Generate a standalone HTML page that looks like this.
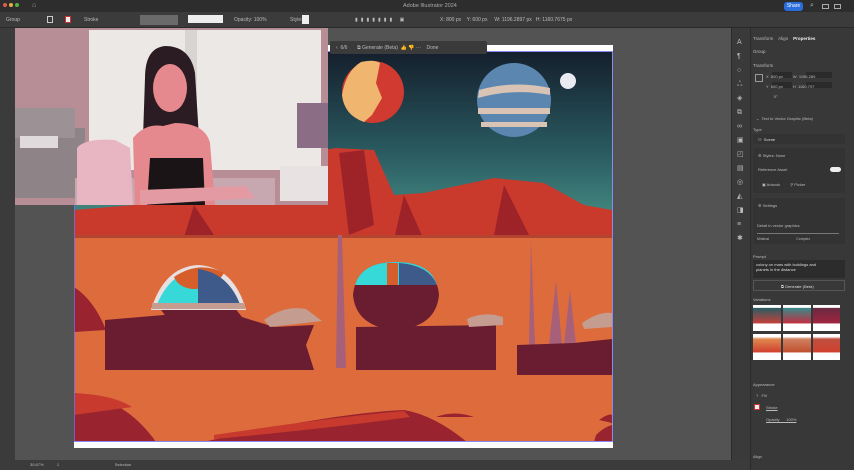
<!DOCTYPE html>
<html><head><meta charset="utf-8"><style>
*{margin:0;padding:0;box-sizing:border-box}
body{width:854px;height:470px;overflow:hidden;background:#535353;font-family:"Liberation Sans",sans-serif;position:relative;color:#ccc}
.abs{position:absolute}
.t{font-size:5px;color:#bbb;white-space:nowrap}
</style></head><body>
<!-- title bar -->
<div class="abs" style="left:0;top:0;width:854px;height:12px;background:#2d2d2d"></div>
<div class="abs" style="left:3px;top:3px;width:4px;height:4px;border-radius:50%;background:#e35a52"></div>
<div class="abs" style="left:9px;top:3px;width:4px;height:4px;border-radius:50%;background:#e2b23a"></div>
<div class="abs" style="left:15px;top:3px;width:4px;height:4px;border-radius:50%;background:#58b347"></div>
<div class="abs t" style="left:32px;top:2px;font-size:7px;color:#aaa">⌂</div>
<div class="abs t" style="left:403px;top:3px;font-size:5.5px;color:#aaa">Adobe Illustrator 2024</div>
<div class="abs" style="left:784px;top:2px;width:19px;height:9px;background:#2a6ddb;border-radius:3px;color:#fff;font-size:5px;text-align:center;line-height:9px">Share</div>
<div class="abs t" style="left:810px;top:2px;font-size:7px">⌕</div>
<div class="abs" style="left:822px;top:4px;width:7px;height:5px;border:1px solid #aaa"></div>
<div class="abs" style="left:834px;top:4px;width:7px;height:5px;border:1px solid #aaa"></div>
<!-- control bar -->
<div class="abs" style="left:0;top:12px;width:854px;height:16px;background:#3b3b3b;border-bottom:1px solid #2a2a2a"></div>
<div class="abs t" style="left:6px;top:17px">Group</div>
<div class="abs" style="left:47px;top:16px;width:6px;height:7px;border:1px solid #ccc"></div>
<div class="abs" style="left:65px;top:16px;width:6px;height:7px;background:#eee;border:1px solid #c33"></div>
<div class="abs t" style="left:84px;top:17px">Stroke</div>
<div class="abs" style="left:140px;top:15px;width:38px;height:10px;background:#6a6a6a"></div>
<div class="abs" style="left:188px;top:15px;width:35px;height:8px;background:#eee"></div>
<div class="abs t" style="left:234px;top:17px">Opacity: 100%</div>
<div class="abs t" style="left:290px;top:17px">Style:</div>
<div class="abs" style="left:302px;top:15px;width:7px;height:9px;background:#eee"></div>
<div class="abs t" style="left:355px;top:17px;letter-spacing:3px">▮▮▮▮▮▮▮ ▣</div>
<div class="abs t" style="left:440px;top:17px">X: 800 px &nbsp;&nbsp; Y: 600 px &nbsp;&nbsp;&nbsp; W: 1196.2897 px &nbsp; H: 1160.7675 px</div>
<!-- left toolbar -->
<div class="abs" style="left:0;top:28px;width:15px;height:432px;background:#3b3b3b"></div>
<!-- artboard -->
<svg class="abs" style="left:74px;top:45px" width="539" height="403" viewBox="0 0 539 403">
<defs><linearGradient id="sky" x1="0" y1="0" x2="0" y2="1"><stop offset="0" stop-color="#141f2c"/><stop offset="0.55" stop-color="#2b5d63"/><stop offset="1" stop-color="#4d9b8c"/></linearGradient></defs>
<rect width="539" height="403" fill="#fff"/>
<rect x="0" y="7" width="538" height="190" fill="url(#sky)"/>
<circle cx="440" cy="55" r="37" fill="#5b86b0"/>
<path d="M405 45 Q440 35 476 43 L476 50 Q440 43 404 53Z M404 63 H476 V69 H404Z M407 77 H473 V82 H407Z" fill="#d9c3b4"/>
<circle cx="299" cy="47" r="31" fill="#d03a30"/>
<path d="M287 17 Q300 14 306 18 L302 38 L308 53 L298 70 L290 77 Q270 70 268 50 Q272 26 287 17Z" fill="#f0b56e"/>
<circle cx="494" cy="36" r="8" fill="#eaeaf2"/>
<path d="M0 165 L60 160 L120 150 L180 140 L215 112 L261 103 L300 105 L320 150 L350 148 L420 133 L470 138 L510 160 L538 165 L538 200 L0 200Z" fill="#c93a2d"/>
<path d="M265 108 L290 105 L300 180 L275 190Z M330 150 L350 195 L320 195Z M430 140 L455 190 L420 190Z M120 160 L140 190 L110 192Z" fill="#9e2328"/>
<rect x="0" y="193" width="538" height="204" fill="#de6b3c"/>
<rect x="0" y="190" width="538" height="3" fill="#b3442f"/>
<path d="M0 242 Q20 255 32 285 L0 287Z M0 348 Q50 352 82 397 L0 397Z M129 397 Q260 368 330 365 Q360 370 393 397Z M522 390 Q530 382 538 380 L538 397 L520 397Z" fill="#9a2330"/>
<path d="M0 348 Q40 350 58 362 L0 370Z M140 390 Q260 372 330 366 L336 372 Q250 384 140 394Z" fill="#c83a2d"/>
<path d="M362 372 Q380 365 400 372 Z M525 375 Q535 368 538 370 L538 378Z" fill="#9a2330"/>
<!-- settlement 1 -->
<path d="M31 275 L90 270 L100 262 L160 262 L168 272 L200 282 L240 280 L232 300 L240 325 L31 325Z" fill="#6a1c30"/>
<path d="M85 262 Q100 285 125 290 Q150 285 165 262Z" fill="#6a1c30"/>
<path d="M77 265 Q90 222 124 220 Q160 222 172 265Z" fill="#e8e0e0"/>
<path d="M82 262 Q95 228 124 224 L124 262Z" fill="#36d8d8"/>
<path d="M100 232 Q125 215 150 228 Q140 245 118 244 Q104 242 100 232Z" fill="#d65e2a"/>
<path d="M124 224 Q155 228 167 262 L124 262Z" fill="#3e5a8a"/>
<rect x="78" y="258" width="93" height="6" fill="#c49c90"/>
<path d="M190 275 Q210 260 232 264 L248 276 L196 282Z" fill="#c49c90"/>
<path d="M262 323 L264 190 L268 190 L272 323Z" fill="#a6607a"/>
<!-- settlement 2 -->
<path d="M279 250 Q282 217 322 217 Q362 217 365 250 Q362 282 322 285 Q282 282 279 250Z" fill="#6a1c30"/>
<path d="M281 240 Q288 217 322 217 Q356 217 363 240Z" fill="#36d8d8"/>
<path d="M313 218 L324 218 L324 240 L313 240Z" fill="#d65e2a"/>
<path d="M325 218 Q355 220 363 240 L325 240Z" fill="#3e5a8a"/>
<path d="M282 282 L422 280 L422 325 L282 325Z" fill="#6a1c30"/>
<path d="M393 274 Q410 266 429 272 L429 280 L395 282Z" fill="#c49c90"/>
<!-- settlement 3 -->
<path d="M455 300 L457 195 L461 300Z M475 300 L482 235 L488 300Z M490 300 L496 245 L502 300Z" fill="#a6607a"/>
<path d="M443 300 L500 298 L538 294 L538 330 L443 330Z" fill="#6a1c30"/>
<path d="M508 278 Q525 266 538 268 L538 282 L510 284Z" fill="#c49c90"/>
<rect x="0" y="396" width="538" height="7" fill="#fff"/>
<rect x="0.5" y="6.5" width="538" height="390" fill="none" stroke="#6c6cf0" stroke-width="0.8"/>
</svg>
<!-- webcam -->
<svg class="abs" style="left:15px;top:28px" width="313" height="177" viewBox="0 0 313 177">
<rect width="313" height="177" fill="#b88e96"/>
<rect x="74" y="2" width="232" height="140" fill="#ece8e6"/>
<rect x="170" y="2" width="12" height="140" fill="#d8d4d2"/>
<rect x="0" y="100" width="70" height="70" fill="#8e8488"/>
<rect x="0" y="80" width="60" height="30" fill="#9c9296"/>
<rect x="5" y="108" width="38" height="12" fill="#e0dadc"/>
<rect x="282" y="75" width="31" height="45" fill="#8b6e86"/>
<rect x="265" y="138" width="48" height="35" fill="#e8e2e2"/>
<rect x="60" y="150" width="200" height="27" fill="#c8a8b0"/>
<path d="M62 120 Q70 110 100 112 L115 120 L118 177 L62 177Z" fill="#e8b6c2"/>
<path d="M130 50 Q130 20 150 18 Q175 18 180 45 L184 110 L170 125 L140 125 L128 110Z" fill="#2a1c22"/>
<ellipse cx="155" cy="60" rx="17" ry="24" fill="#e6898e"/>
<path d="M118 110 Q130 95 148 98 L160 95 Q190 95 195 115 L200 177 L120 177Z" fill="#e6898e"/>
<path d="M135 130 L188 130 L190 177 L132 177Z" fill="#1a1416"/>
<path d="M125 162 L230 158 L240 170 L125 177Z" fill="#e49aa2"/>
</svg>
<!-- contextual bar -->
<div class="abs" style="left:330px;top:41px;width:157px;height:13px;background:#3a3a3a;border-radius:2px"></div>
<div class="abs t" style="left:336px;top:45px">‹ &nbsp;6/6 &nbsp;&nbsp;&nbsp;&nbsp;&nbsp; ⧉ Generate (Beta) &nbsp;👍 👎 ··· &nbsp;&nbsp; Done</div>
<!-- bottom status -->
<div class="abs" style="left:0;top:460px;width:854px;height:10px;background:#3b3b3b"></div>
<div class="abs t" style="left:30px;top:462px;font-size:4px">30.67% &nbsp;&nbsp;&nbsp;&nbsp;&nbsp;&nbsp;&nbsp;&nbsp;&nbsp;&nbsp; 1 &nbsp;&nbsp;&nbsp;&nbsp;&nbsp;&nbsp;&nbsp;&nbsp;&nbsp;&nbsp;&nbsp;&nbsp;&nbsp;&nbsp;&nbsp;&nbsp;&nbsp;&nbsp;&nbsp;&nbsp;&nbsp;&nbsp;&nbsp;&nbsp;&nbsp;&nbsp;&nbsp;&nbsp;&nbsp;&nbsp;&nbsp;&nbsp;&nbsp;&nbsp;&nbsp;&nbsp;&nbsp;&nbsp;&nbsp;&nbsp;&nbsp;&nbsp;&nbsp;&nbsp;&nbsp;&nbsp;&nbsp;&nbsp; Selection</div>
<!-- right icon strip & panel -->
<div class="abs" style="left:731px;top:28px;width:19px;height:432px;background:#3a3a3a;border-left:1px solid #2a2a2a"></div>
<div class="abs" style="left:750px;top:28px;width:104px;height:442px;background:#383838;border-left:1px solid #2a2a2a"></div>
<div class="abs t" style="left:737px;top:36px;font-size:7px;line-height:14px;color:#bbb">A<br>¶<br>○<br>ஃ<br>◈<br>⧉<br>∞<br>▣<br>◰<br>▤<br>◎<br>◭<br>◨<br>≡<br>✱</div>
<div class="abs t" style="left:753px;top:36px;font-size:4.5px">Transform &nbsp;&nbsp; Align &nbsp;&nbsp; <b style="color:#eee">Properties</b></div>
<div class="abs t" style="left:753px;top:49px;font-size:4.5px">Group</div>
<div class="abs t" style="left:753px;top:63px;font-size:4.5px">Transform</div>
<div class="abs" style="left:755px;top:74px;width:8px;height:8px;border:1px solid #999"></div>
<div class="abs" style="left:772px;top:72px;width:20px;height:6px;background:#2a2a2a"></div>
<div class="abs" style="left:806px;top:72px;width:26px;height:6px;background:#2a2a2a"></div>
<div class="abs" style="left:772px;top:82px;width:20px;height:6px;background:#2a2a2a"></div>
<div class="abs" style="left:806px;top:82px;width:26px;height:6px;background:#2a2a2a"></div>
<div class="abs t" style="left:766px;top:72px;font-size:4px;line-height:10px">X &nbsp;800 px &nbsp;&nbsp;&nbsp;&nbsp;&nbsp;&nbsp;&nbsp; W &nbsp;1196.289<br>Y &nbsp;600 px &nbsp;&nbsp;&nbsp;&nbsp;&nbsp;&nbsp;&nbsp; H &nbsp;1160.797<br>&nbsp;&nbsp;&nbsp;&nbsp;&nbsp;&nbsp; 0°</div>
<div class="abs t" style="left:756px;top:116px;font-size:4px">⌄ &nbsp;Text to Vector Graphic (Beta)</div>
<div class="abs t" style="left:753px;top:127px;font-size:4px">Type</div>
<div class="abs" style="left:753px;top:134px;width:92px;height:10px;background:#333"></div>
<div class="abs t" style="left:758px;top:137px;font-size:4px;color:#ddd">⚇ &nbsp;Scene</div>
<div class="abs" style="left:753px;top:148px;width:92px;height:45px;background:#333"></div>
<div class="abs t" style="left:758px;top:153px;font-size:4px">⚙ Styles: None</div>
<div class="abs t" style="left:758px;top:167px;font-size:4px">Reference Asset</div>
<div class="abs" style="left:830px;top:167px;width:11px;height:5px;background:#eee;border-radius:3px"></div>
<div class="abs t" style="left:762px;top:182px;font-size:4px">▣ Artwork &nbsp;&nbsp;&nbsp;&nbsp;&nbsp;&nbsp;&nbsp; ⚲ Picker</div>
<div class="abs" style="left:753px;top:198px;width:92px;height:46px;background:#333"></div>
<div class="abs t" style="left:758px;top:203px;font-size:4px">⚙ Settings</div>
<div class="abs t" style="left:757px;top:223px;font-size:4px">Detail in vector graphics</div>
<div class="abs" style="left:757px;top:233px;width:82px;height:1px;background:#777"></div>
<div class="abs t" style="left:757px;top:237px;font-size:3.5px">Minimal &nbsp;&nbsp;&nbsp;&nbsp;&nbsp;&nbsp;&nbsp;&nbsp;&nbsp;&nbsp;&nbsp;&nbsp;&nbsp;&nbsp;&nbsp;&nbsp;&nbsp;&nbsp;&nbsp;&nbsp;&nbsp;&nbsp;&nbsp;&nbsp;&nbsp;&nbsp; Complex</div>
<div class="abs t" style="left:753px;top:254px;font-size:4px">Prompt</div>
<div class="abs" style="left:753px;top:260px;width:92px;height:18px;background:#2c2c2c"></div>
<div class="abs t" style="left:756px;top:262px;font-size:4px;line-height:5px;color:#ddd">colony on mars with buildings and<br>planets in the distance</div>
<div class="abs" style="left:753px;top:280px;width:92px;height:11px;border:1px solid #555"></div>
<div class="abs t" style="left:781px;top:284px;font-size:4px;color:#ddd">⧉ Generate (Beta)</div>
<div class="abs t" style="left:753px;top:297px;font-size:4px">Variations</div>
<div class="abs" style="left:753px;top:305px;width:28px;height:26px;background:linear-gradient(#fff 10%,#2b5d63 12%,#c4403a 70%,#fff 72%)"></div>
<div class="abs" style="left:783px;top:305px;width:28px;height:26px;background:linear-gradient(#fff 10%,#3a8a8a 12%,#c03040 70%,#fff 72%)"></div>
<div class="abs" style="left:813px;top:305px;width:27px;height:26px;background:linear-gradient(#fff 10%,#6a2a40 12%,#a02540 70%,#fff 72%)"></div>
<div class="abs" style="left:753px;top:334px;width:28px;height:26px;background:linear-gradient(#fff 10%,#e08850 20%,#d0402e 70%,#fff 72%)"></div>
<div class="abs" style="left:783px;top:334px;width:28px;height:26px;background:linear-gradient(#fff 10%,#d08060 20%,#c0502e 70%,#fff 72%)"></div>
<div class="abs" style="left:813px;top:334px;width:27px;height:26px;background:linear-gradient(#fff 10%,#c05040 20%,#d0402e 70%,#fff 72%)"></div>
<div class="abs t" style="left:753px;top:382px;font-size:4px">Appearance</div>
<div class="abs t" style="left:756px;top:393px;font-size:4px">? &nbsp; Fill</div>
<div class="abs" style="left:754px;top:404px;width:6px;height:6px;background:#eee;border:1px solid #c33"></div>
<div class="abs t" style="left:766px;top:405px;font-size:4px;text-decoration:underline">Stroke</div>
<div class="abs t" style="left:766px;top:417px;font-size:4px;text-decoration:underline">Opacity &nbsp;&nbsp;&nbsp;&nbsp; 100%</div>
<div class="abs t" style="left:753px;top:454px;font-size:4px">Align</div>
</body></html>
